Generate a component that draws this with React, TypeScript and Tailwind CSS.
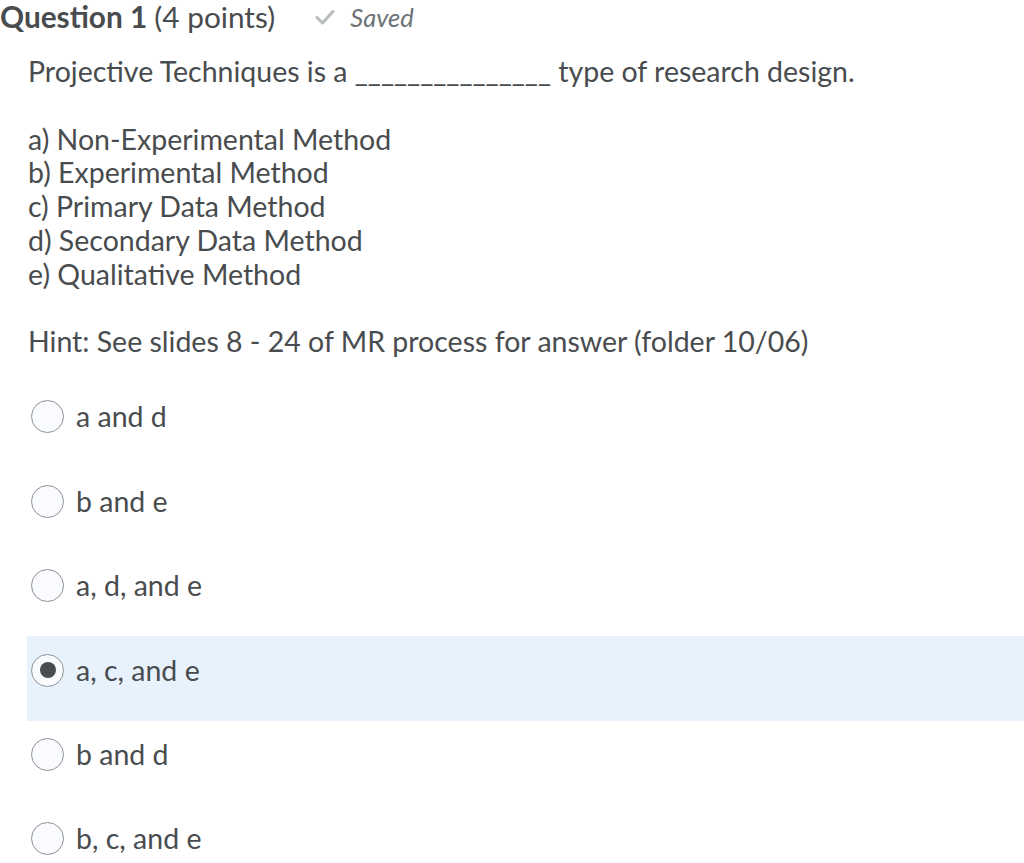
import React from "react";

const options = [
  { label: "a and d", checked: false },
  { label: "b and e", checked: false },
  { label: "a, d, and e", checked: false },
  { label: "a, c, and e", checked: true },
  { label: "b and d", checked: false },
  { label: "b, c, and e", checked: false },
];

function Radio({ checked }: { checked: boolean }) {
  return (
    <span className="flex h-[33px] w-[33px] shrink-0 items-center justify-center rounded-full border border-[#8e9194] bg-[#f9fbff]">
      {checked && <span className="h-[16px] w-[16px] rounded-full bg-[#494c4e]" />}
    </span>
  );
}

export default function App() {
  return (
    <div
      className="h-[863px] w-[1024px] overflow-hidden bg-white text-[#494c4e]"
      style={{ fontFamily: "Lato, 'Open Sans', sans-serif" }}
    >
      <div className="flex h-[34px] items-center text-[29.8px] leading-[34px]">
        <span className="font-bold">Question 1</span>
        <span className="ml-[7px]">(4 points)</span>
        <span className="ml-[40px] flex items-center text-[25.5px] italic text-[#6e7376]">
          <svg width="20" height="16" viewBox="0 0 20 16" className="mr-[15px]">
            <path d="M2 8.5 L7.5 14 L18 2.5" fill="none" stroke="#b8bcbf" strokeWidth="3" strokeLinecap="round" strokeLinejoin="round" />
          </svg>
          Saved
        </span>
      </div>
      <div className="pl-[28px] pt-[21px] text-[28.5px] leading-[33.8px]">
        <p>Projective Techniques is a _______________ type of research design.</p>
        <p className="mt-[33.8px]">
          a) Non-Experimental Method
          <br />
          b) Experimental Method
          <br />
          c) Primary Data Method
          <br />
          d) Secondary Data Method
          <br />
          e) Qualitative Method
        </p>
        <p className="mt-[33.8px]">Hint: See slides 8 - 24 of MR process for answer (folder 10/06)</p>
      </div>
      <div className="ml-[27px] mt-[24px] flex flex-col">
        {options.map((o) => (
          <div
            key={o.label}
            className={`flex h-[84.4px] items-center pb-[17px] pl-[4px] text-[28.5px] ${o.checked ? "bg-[#e8f2fc]" : ""}`}
          >
            <Radio checked={o.checked} />
            <span className="ml-[12px]">{o.label}</span>
          </div>
        ))}
      </div>
    </div>
  );
}
